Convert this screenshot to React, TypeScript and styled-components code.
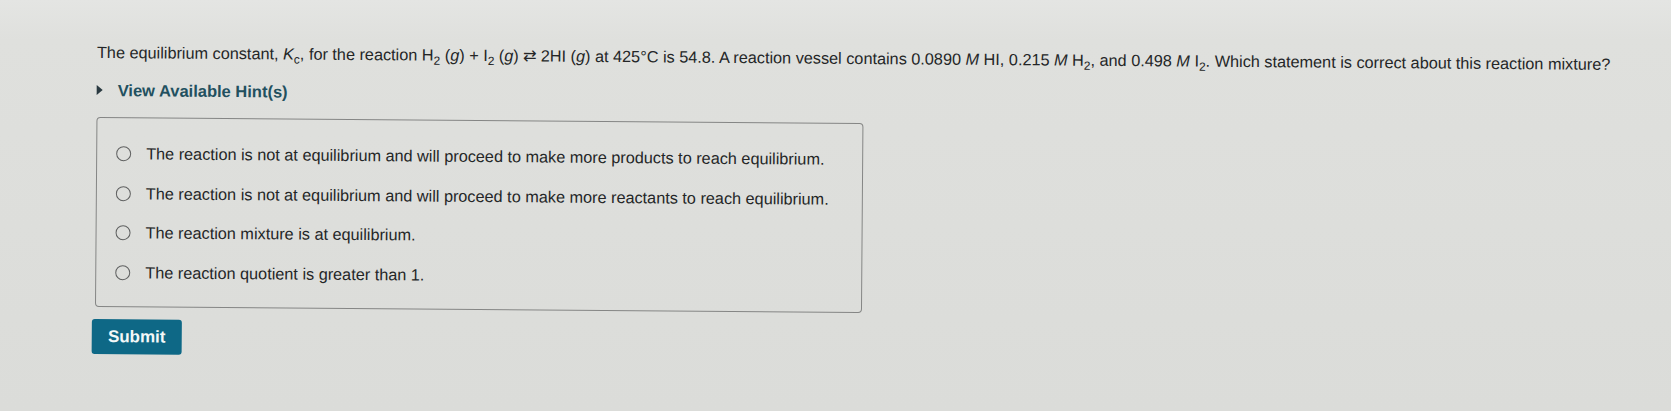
import React, { FC } from 'react';
import styled, { createGlobalStyle } from 'styled-components';

const GlobalStyle = createGlobalStyle`
  html, body {
    margin: 0;
    padding: 0;
  }
  body {
    width: 1671px;
    height: 411px;
    overflow: hidden;
    background: linear-gradient(180deg, #e4e5e3 0px, #dfe0dd 40px, #dbdcd9 411px);
    font-family: 'Liberation Sans', Arial, sans-serif;
    color: #242627;
  }
`;

// the screenshot is a slightly tilted photo of the screen
const Page = styled.div`
  display: flex;
  flex-direction: column;
  align-items: flex-start;
  padding: 42px 0 0 97px;
  transform: rotate(0.45deg);
  transform-origin: 97px 50px;
`;

const Question = styled.p`
  margin: 0;
  font-size: 16.25px;
  line-height: 20px;
  white-space: nowrap;
  color: #242627;

  sub {
    font-size: 12px;
    line-height: 0;
    vertical-align: -4px;
  }
`;

const HintToggle = styled.button`
  display: flex;
  align-items: center;
  gap: 15px;
  margin: 18px 0 0 0;
  padding: 0;
  border: 0;
  background: none;
  font-family: inherit;
  font-size: 16.5px;
  font-weight: bold;
  line-height: 20px;
  color: #22505f;
  cursor: pointer;
`;

const Caret = styled.span`
  width: 0;
  height: 0;
  border-top: 5px solid transparent;
  border-bottom: 5px solid transparent;
  border-left: 6px solid #2a3a41;
`;

const Options = styled.div`
  display: flex;
  flex-direction: column;
  box-sizing: border-box;
  width: 767px;
  margin-top: 17px;
  padding: 16px 0 14px 19px;
  border: 1px solid #858685;
  border-radius: 4px;
`;

const Option = styled.label`
  display: flex;
  align-items: center;
  gap: 15px;
  height: 39.5px;
  font-size: 16.25px;
  color: #242627;
  cursor: pointer;
`;

const Radio = styled.span`
  box-sizing: border-box;
  flex: none;
  width: 15px;
  height: 15px;
  border: 1.5px solid #5f6060;
  border-radius: 50%;
`;

const SubmitButton = styled.button`
  margin: 12px 0 0 -3px;
  width: 90px;
  height: 35px;
  padding: 0;
  border: 0;
  border-radius: 3px;
  background: #0e6886;
  color: #f4f8f8;
  font-family: inherit;
  font-size: 17px;
  font-weight: bold;
  cursor: pointer;
`;

const choices = [
  'The reaction is not at equilibrium and will proceed to make more products to reach equilibrium.',
  'The reaction is not at equilibrium and will proceed to make more reactants to reach equilibrium.',
  'The reaction mixture is at equilibrium.',
  'The reaction quotient is greater than 1.',
];

const App: FC = () => {
  return (
    <>
      <GlobalStyle />
      <Page>
        <Question>
          The equilibrium constant, <i>K</i>
          <sub>c</sub>, for the reaction H<sub>2</sub> (<i>g</i>) + I<sub>2</sub> (<i>g</i>) ⇄ 2HI (
          <i>g</i>) at 425°C is 54.8. A reaction vessel contains 0.0890 <i>M</i> HI, 0.215 <i>M</i> H
          <sub>2</sub>, and 0.498 <i>M</i> I<sub>2</sub>. Which statement is correct about this reaction
          mixture?
        </Question>
        <HintToggle type="button">
          <Caret />
          View Available Hint(s)
        </HintToggle>
        <Options>
          {choices.map((text) => (
            <Option key={text}>
              <Radio />
              {text}
            </Option>
          ))}
        </Options>
        <SubmitButton type="button">Submit</SubmitButton>
      </Page>
    </>
  );
};

export default App;
